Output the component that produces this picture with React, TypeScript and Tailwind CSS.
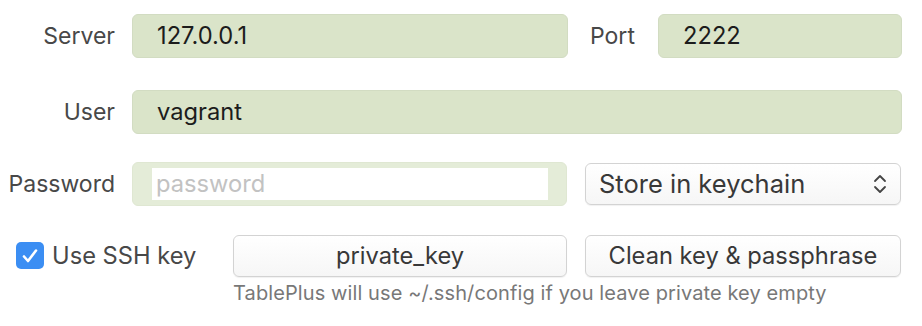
import React from 'react';

const font = { fontFamily: 'Inter, "Liberation Sans", sans-serif' };

const Label: React.FC<{ text: string }> = ({ text }) => (
  <div className="w-[115px] shrink-0 text-right text-[23px] text-[#484848]">{text}</div>
);

const Field: React.FC<{ value: string; className?: string }> = ({ value, className = '' }) => (
  <div
    className={`h-[44px] rounded-[6px] border border-[#d2dcc2] bg-[#dae4c9] pl-[24px] flex items-center text-[23.7px] text-[#1c1c1c] ${className}`}
  >
    {value}
  </div>
);

const MacButton: React.FC<{ children: React.ReactNode; className?: string }> = ({ children, className = '' }) => (
  <div
    className={`h-[42px] rounded-[6px] border border-[#d3d3d3] bg-gradient-to-b from-white to-[#f6f6f6] shadow-[0_1px_1px_rgba(0,0,0,0.06)] flex items-center text-[23.7px] text-[#383838] ${className}`}
  >
    {children}
  </div>
);

export default function App() {
  return (
    <div className="w-[922px] h-[326px] bg-white pt-[14px]" style={font}>
      {/* Server / Port */}
      <div className="flex items-center">
        <Label text="Server" />
        <Field value="127.0.0.1" className="ml-[17px] w-[436px]" />
        <div className="ml-[22px] w-[68px] text-[23px] text-[#484848]">Port</div>
        <Field value="2222" className="w-[244px]" />
      </div>

      {/* User */}
      <div className="flex items-center mt-[32px]">
        <Label text="User" />
        <Field value="vagrant" className="ml-[17px] w-[770px]" />
      </div>

      {/* Password */}
      <div className="flex items-center mt-[28px]">
        <Label text="Password" />
        <div className="ml-[17px] w-[435px] h-[44px] rounded-[6px] border border-[#dfe7d2] bg-[#e4ecd8] flex items-center pl-[19px]">
          <div className="w-[396px] h-[32px] bg-white flex items-center pl-[4px] text-[23.7px] text-[#c2c2c2]">
            password
          </div>
        </div>
        <MacButton className="ml-[18px] w-[316px] pl-[13px] pr-[13px] justify-between">
          <span className="text-[25.5px]">Store in keychain</span>
          <svg width="14" height="22" viewBox="0 0 14 22" fill="none" stroke="#444" strokeWidth="1.8" strokeLinecap="round" strokeLinejoin="round">
            <path d="M2 8 L7 3 L12 8" />
            <path d="M2 14 L7 19 L12 14" />
          </svg>
        </MacButton>
      </div>

      {/* SSH key */}
      <div className="flex items-center mt-[29px]">
        <div className="w-[233px] shrink-0 flex items-center pl-[16px]">
          <div className="w-[28px] h-[27px] rounded-[5px] bg-[#3b8ef3] flex items-center justify-center">
            <svg width="18" height="16" viewBox="0 0 18 16" fill="none" stroke="white" strokeWidth="2.6" strokeLinecap="round" strokeLinejoin="round">
              <path d="M3 8.5 L7 13 L15 2.5" />
            </svg>
          </div>
          <span className="ml-[8px] text-[23.7px] text-[#484848]">Use SSH key</span>
        </div>
        <MacButton className="w-[334px] justify-center">private_key</MacButton>
        <MacButton className="ml-[18px] w-[316px] justify-center">Clean key &amp; passphrase</MacButton>
      </div>

      {/* hint */}
      <div className="pl-[233px] mt-[3px] text-[20px] tracking-[0.1px] text-[#787878] leading-[26px]">
        TablePlus will use ~/.ssh/config if you leave private key empty
      </div>
    </div>
  );
}
